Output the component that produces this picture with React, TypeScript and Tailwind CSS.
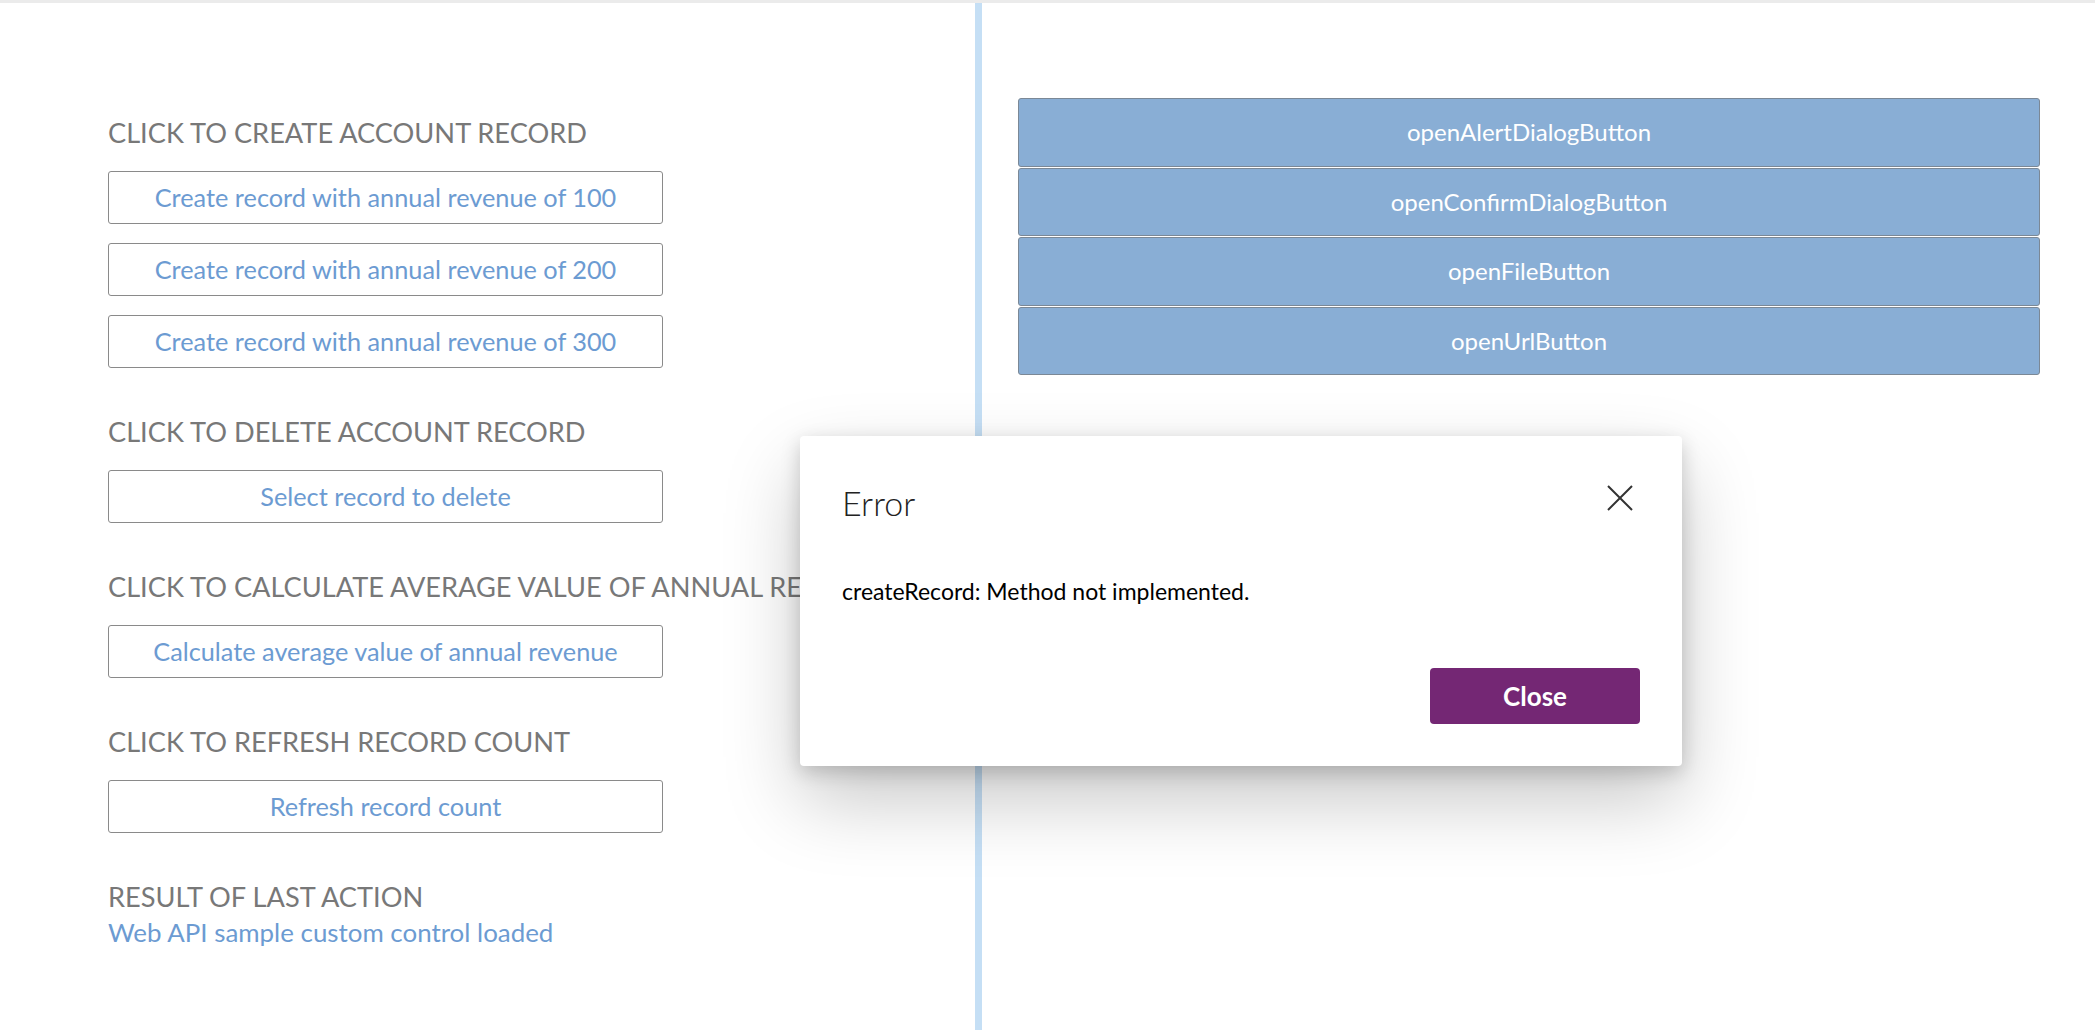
const LeftButton = ({ label }: { label: string }) => (
    <button className="w-[555px] h-[53px] border border-[#8a8a8a] rounded-[3px] bg-white text-[#6c9bd2] text-[25.3px] leading-none">
        {label}
    </button>
);

const Heading = ({ children }: { children: string }) => (
    <h2 className="max-w-[692px] overflow-hidden text-[27.2px] text-[#787878] uppercase leading-[36px] whitespace-nowrap">
        {children}
    </h2>
);

const RIGHT_BUTTONS = ["openAlertDialogButton", "openConfirmDialogButton", "openFileButton", "openUrlButton"];

export default function App() {
    return (
        <div className="relative min-h-screen bg-white font-['Lato',sans-serif]">
            <div className="h-[3px] bg-[#ebebeb]" />
            <div className="flex h-[1027px]">
                {/* left column */}
                <div className="w-[975px] pl-[108px] pt-[112px] flex flex-col">
                    <Heading>Click to create account record</Heading>
                    <div className="mt-[20px] flex flex-col gap-[19px]">
                        <LeftButton label="Create record with annual revenue of 100" />
                        <LeftButton label="Create record with annual revenue of 200" />
                        <LeftButton label="Create record with annual revenue of 300" />
                    </div>

                    <div className="mt-[46px]">
                        <Heading>Click to delete account record</Heading>
                    </div>
                    <div className="mt-[20px]">
                        <LeftButton label="Select record to delete" />
                    </div>

                    <div className="mt-[46px]">
                        <Heading>Click to calculate average value of annual revenue</Heading>
                    </div>
                    <div className="mt-[20px]">
                        <LeftButton label="Calculate average value of annual revenue" />
                    </div>

                    <div className="mt-[46px]">
                        <Heading>Click to refresh record count</Heading>
                    </div>
                    <div className="mt-[20px]">
                        <LeftButton label="Refresh record count" />
                    </div>

                    <div className="mt-[46px]">
                        <Heading>Result of last action</Heading>
                    </div>
                    <p className="mt-[2px] text-[25.9px] leading-[30px] text-[#6c9bd2]">
                        Web API sample custom control loaded
                    </p>
                </div>

                <div className="w-[7px] bg-[#c5dff5]" />

                {/* right column */}
                <div className="flex-1 pl-[36px] pr-[55px] pt-[95px] flex flex-col gap-px">
                    {RIGHT_BUTTONS.map((b) => (
                        <button
                            key={b}
                            className="h-[68.5px] border border-[#7b8896] rounded-[3px] bg-[#89aed5] text-white text-[24px] leading-none"
                        >
                            {b}
                        </button>
                    ))}
                </div>
            </div>

            {/* error dialog */}
            <div className="absolute left-[800px] top-[436px] w-[882px] h-[330px] bg-white rounded-[4px] shadow-[0_34px_77px_rgba(0,0,0,0.22),0_6px_19px_rgba(0,0,0,0.18)] px-[42px] pt-[47px] pb-[42px] flex flex-col">
                <div className="flex items-start justify-between">
                    <h1 className="text-[34px] leading-[40px] font-light text-[#222]">Error</h1>
                    <svg width="26" height="26" viewBox="0 0 26 26" className="mt-[2px] mr-[7px]">
                        <path d="M1 1 L25 25 M25 1 L1 25" stroke="#333" strokeWidth="2" />
                    </svg>
                </div>
                <p className="mt-[53px] text-[23px] leading-[30px] text-black">createRecord: Method not implemented.</p>
                <div className="mt-auto flex justify-end">
                    <button className="w-[210px] h-[56px] rounded-[4px] bg-[#742774] text-white text-[26px] font-bold leading-none">
                        Close
                    </button>
                </div>
            </div>
        </div>
    );
}
